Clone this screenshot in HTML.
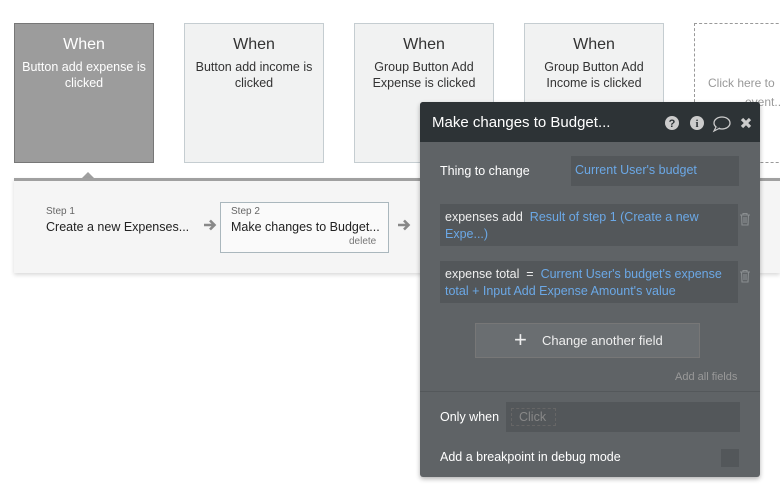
<!DOCTYPE html>
<html><head><style>
*{margin:0;padding:0;box-sizing:border-box}
body{width:780px;height:498px;background:#fff;position:relative;overflow:hidden;font-family:"Liberation Sans",sans-serif}
.card{position:absolute;top:23px;width:140px;height:140px;background:#f1f2f2;border:1px solid #c5cdd1;text-align:center;color:#333;font-family:"Liberation Sans Narrow","Liberation Sans",sans-serif}
.card h3{font-weight:normal;font-size:16px;margin-top:12px}
.card p{font-size:12.5px;line-height:16px;margin-top:5px;padding:0 6px}
.a{position:absolute}
.dark{color:#fff}
.fld{position:absolute;background:#53575a;color:#eee;font-size:12px}
.blue{color:#6ba8e6}
</style></head><body>
<div class="card" style="left:14px;background:#9c9c9c;border-color:#777;color:#fff"><h3>When</h3><p>Button add expense is clicked</p></div>
<div class="card" style="left:184px"><h3>When</h3><p>Button add income is clicked</p></div>
<div class="card" style="left:354px"><h3>When</h3><p>Group Button Add Expense is clicked</p></div>
<div class="card" style="left:524px"><h3>When</h3><p>Group Button Add Income is clicked</p></div>
<div class="a" style="left:694px;top:23px;width:100px;height:140px;border:1px dashed #999"></div>
<div class="a" style="left:708px;top:76px;font-size:12px;color:#999">Click here to</div>
<div class="a" style="left:745px;top:95px;font-size:12px;color:#999">event...</div>
<div class="a" style="left:81px;top:172px;width:0;height:0;border-left:7px solid transparent;border-right:7px solid transparent;border-bottom:7px solid #a0a0a0"></div>
<div class="a" style="left:14px;top:178px;width:766px;height:95px;background:#f5f5f5;border-top:3px solid #a0a0a0;box-shadow:0 2px 4px rgba(0,0,0,.15)"></div>
<div class="a" style="left:46px;top:206px;font-size:10px;color:#666">Step 1</div>
<div class="a" style="left:46px;top:220px;font-size:12.5px;color:#222">Create a new Expenses...</div>
<svg class="a" style="left:203px;top:218px" width="14" height="14" viewBox="0 0 14 14"><path d="M1 7 H11 M7 2.5 L11.5 7 L7 11.5" stroke="#888" stroke-width="2.6" fill="none"/></svg>
<div class="a" style="left:220px;top:202px;width:169px;height:51px;border:1px solid #aab7bd;background:#fafafa"></div>
<div class="a" style="left:231px;top:206px;font-size:10px;color:#666">Step 2</div>
<div class="a" style="left:231px;top:220px;font-size:12.5px;color:#222">Make changes to Budget...</div>
<div class="a" style="left:349px;top:236px;font-size:10px;color:#777">delete</div>
<svg class="a" style="left:397px;top:218px" width="14" height="14" viewBox="0 0 14 14"><path d="M1 7 H11 M7 2.5 L11.5 7 L7 11.5" stroke="#888" stroke-width="2.6" fill="none"/></svg>

<div class="a" style="left:420px;top:102px;width:340px;height:375px;background:#5f6366;border-radius:3px;box-shadow:0 2px 5px rgba(0,0,0,.3);overflow:hidden">
 <div style="height:40px;background:#2d3336;color:#fff;font-size:15px;padding:12px 0 0 12px">Make changes to Budget...</div>
 <svg class="a" style="left:244px;top:13px" width="92" height="18" viewBox="0 0 92 18">
  <circle cx="8" cy="8" r="7" fill="#ccc"/><text x="8" y="12" font-size="11" font-weight="bold" text-anchor="middle" fill="#2d3336" font-family="Liberation Sans">?</text>
  <circle cx="33" cy="8" r="7" fill="#ccc"/><text x="33" y="12" font-size="11" font-weight="bold" text-anchor="middle" fill="#2d3336" font-family="Liberation Serif">i</text>
  <ellipse cx="58" cy="8" rx="8" ry="6" fill="none" stroke="#ccc" stroke-width="1.3"/><path d="M52 12 L50 16 L56 13" fill="#2d3336" stroke="#ccc" stroke-width="1.2"/>
  <path d="M78 4 L86 12 M86 4 L78 12" stroke="#ccc" stroke-width="3.2"/>
 </svg>
</div>
<div class="a dark" style="left:440px;top:164px;font-size:12.5px">Thing to change</div>
<div class="fld blue" style="left:571px;top:156px;width:168px;height:30px;padding:7px 4px;font-size:12.5px">Current User's budget</div>
<div class="fld" style="left:440px;top:204px;width:298px;height:42px;padding:5px 5px;line-height:17px;font-size:12.5px">expenses add &nbsp;<span class="blue">Result of step 1 (Create a new Expe...)</span></div>
<div class="fld" style="left:440px;top:261px;width:298px;height:42px;padding:5px 5px;line-height:17px;font-size:12.5px">expense total &nbsp;= &nbsp;<span class="blue">Current User's budget's expense total + Input Add Expense Amount's value</span></div>
<svg class="a" style="left:739px;top:212px" width="12" height="14" viewBox="0 0 12 14"><path d="M1 3 H11 M4 3 V1.5 H8 V3 M2.5 3 L3 13 H9 L9.5 3 M5 5 V11 M7 5 V11" stroke="#8a8e90" stroke-width="1.1" fill="none"/></svg>
<svg class="a" style="left:739px;top:269px" width="12" height="14" viewBox="0 0 12 14"><path d="M1 3 H11 M4 3 V1.5 H8 V3 M2.5 3 L3 13 H9 L9.5 3 M5 5 V11 M7 5 V11" stroke="#8a8e90" stroke-width="1.1" fill="none"/></svg>
<div class="a" style="left:475px;top:323px;width:225px;height:35px;background:#6a6e71;border:1px solid #777;color:#eee;font-size:13px;padding:9px 0 0 40px"><span style="position:absolute;left:38px;top:3px;font-size:22px">+</span><span style="margin-left:26px">Change another field</span></div>
<div class="a" style="left:675px;top:371px;font-size:11px;color:#999">Add all fields</div>
<div class="a" style="left:420px;top:391px;width:340px;height:1px;background:#54585b"></div>
<div class="a dark" style="left:440px;top:410px;font-size:12.5px">Only when</div>
<div class="fld" style="left:506px;top:402px;width:234px;height:30px"></div>
<div class="a" style="left:511px;top:408px;width:45px;height:18px;border:1px dashed #666;color:#888;font-size:12.5px;padding:1px 7px">Click</div>
<div class="a dark" style="left:440px;top:450px;font-size:12.5px">Add a breakpoint in debug mode</div>
<div class="a" style="left:721px;top:449px;width:18px;height:18px;background:#53575a"></div>
</body></html>
